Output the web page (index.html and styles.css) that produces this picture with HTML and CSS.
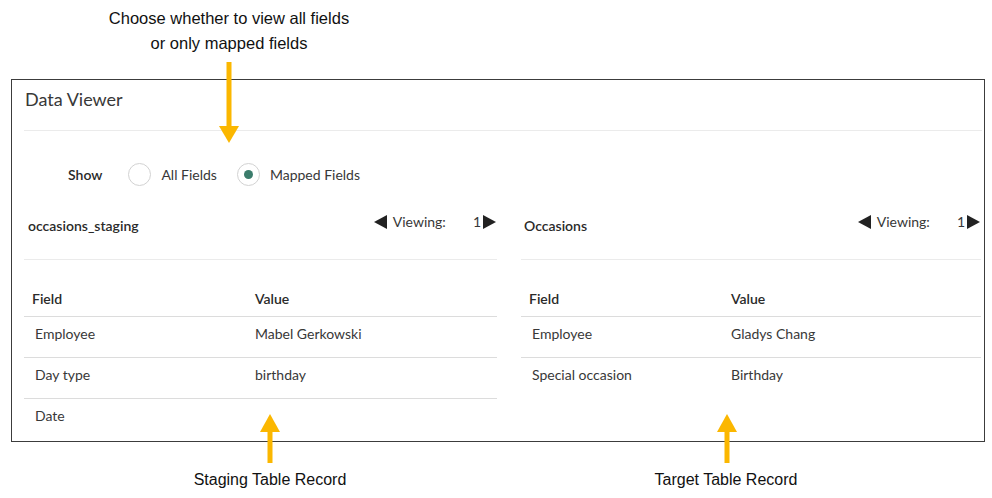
FILE: index.html
```html
<!DOCTYPE html>
<html lang="en">
<head>
    <meta charset="UTF-8">
    <title>Data Viewer</title>
    <link rel="stylesheet" href="styles.css">
</head>
<body>

<div class="page">
    <div class="note-top">Choose whether to view all fields<br>or only mapped fields</div>

    <div class="viewer">
        <div class="viewer-head">Data Viewer</div>

        <div class="show-row">
            <span class="show-label">Show</span>
            <label class="radio"><span class="radio-dot"></span>All Fields</label>
            <label class="radio checked"><span class="radio-dot"></span>Mapped Fields</label>
        </div>

        <div class="panels">
            <!-- staging side -->
            <div class="panel panel-left">
                <div class="panel-head">
                    <span class="panel-title">occasions_staging</span>
                    <div class="pager">
                        <svg class="tri" width="13" height="14" viewBox="0 0 13 14"><polygon points="13,0 13,14 0,7"/></svg>
                        <span class="pager-label">Viewing:</span>
                        <span class="pager-num">1</span>
                        <svg class="tri" width="13" height="14" viewBox="0 0 13 14"><polygon points="0,0 0,14 13,7"/></svg>
                    </div>
                </div>
                <div class="rec">
                    <div class="rec-row rec-header"><span class="cell-f">Field</span><span class="cell-v">Value</span></div>
                    <div class="rec-row"><span class="cell-f">Employee</span><span class="cell-v">Mabel Gerkowski</span></div>
                    <div class="rec-row"><span class="cell-f">Day type</span><span class="cell-v">birthday</span></div>
                    <div class="rec-row last"><span class="cell-f">Date</span><span class="cell-v"></span></div>
                </div>
            </div>

            <!-- target side -->
            <div class="panel panel-right">
                <div class="panel-head">
                    <span class="panel-title">Occasions</span>
                    <div class="pager">
                        <svg class="tri" width="13" height="14" viewBox="0 0 13 14"><polygon points="13,0 13,14 0,7"/></svg>
                        <span class="pager-label">Viewing:</span>
                        <span class="pager-num">1</span>
                        <svg class="tri" width="13" height="14" viewBox="0 0 13 14"><polygon points="0,0 0,14 13,7"/></svg>
                    </div>
                </div>
                <div class="rec">
                    <div class="rec-row rec-header"><span class="cell-f">Field</span><span class="cell-v">Value</span></div>
                    <div class="rec-row"><span class="cell-f">Employee</span><span class="cell-v">Gladys Chang</span></div>
                    <div class="rec-row last"><span class="cell-f">Special occasion</span><span class="cell-v">Birthday</span></div>
                </div>
            </div>
        </div>
    </div>

    <div class="captions">
        <span>Staging Table Record</span>
        <span>Target Table Record</span>
    </div>

    <!-- callout arrows -->
    <svg class="arrow arrow-down" width="20" height="82" viewBox="0 0 20 82">
        <rect x="7.5" y="0" width="5" height="66"/>
        <polygon points="0,64 20,64 10,81"/>
    </svg>
    <svg class="arrow arrow-up arrow-staging" width="20" height="49" viewBox="0 0 20 49">
        <polygon points="10,0 20,18 0,18"/>
        <rect x="7.5" y="17" width="5" height="32"/>
    </svg>
    <svg class="arrow arrow-up arrow-target" width="20" height="49" viewBox="0 0 20 49">
        <polygon points="10,0 20,18 0,18"/>
        <rect x="7.5" y="17" width="5" height="32"/>
    </svg>
</div>

</body>
</html>
```

FILE: styles.css
```css
body {
    margin: 0;
    background-color: white;
    font-family: Lato, "Liberation Sans", sans-serif;
    color: #383838;
}
.page {
    position: relative;
    width: 992px;
    height: 498px;
}
.note-top {
    width: 458px;
    height: 73px;
    padding-top: 6px;
    text-align: center;
    font-family: "Liberation Sans", Arial, sans-serif;
    font-size: 16.5px;
    line-height: 25px;
    color: #111;
}
.viewer {
    margin-left: 11px;
    width: 972px;
    height: 361px;
    border: 1px solid #3c3c3c;
}
.viewer-head {
    margin: 0 2px 0 12px;
    height: 42px;
    padding: 8px 0 0 1px;
    font-size: 18px;
    line-height: 22px;
    border-bottom: 1px solid #ebebeb;
}
.show-row {
    display: flex;
    align-items: center;
    height: 24px;
    margin-top: 31px;
    padding-left: 56px;
    font-size: 14px;
}
.show-label {
    font-weight: 600;
    color: #2a2a2a;
    margin-right: 26px;
}
.radio {
    display: flex;
    align-items: center;
    margin-right: 20px;
}
.radio-dot {
    width: 21px;
    height: 21px;
    border: 1px solid #d2d2d2;
    border-radius: 50%;
    margin-right: 10px;
    display: flex;
    align-items: center;
    justify-content: center;
}
.radio.checked .radio-dot::after {
    content: "";
    width: 9px;
    height: 9px;
    border-radius: 50%;
    background-color: #3b7c6b;
}
.panels {
    display: flex;
    gap: 24px;
    padding-left: 12px;
}
.panel-left {
    width: 473px;
}
.panel-right {
    width: 460px;
}
.panel-head {
    display: flex;
    justify-content: space-between;
    align-items: flex-start;
    height: 74px;
    box-sizing: border-box;
    border-bottom: 1px solid #ebebeb;
    font-size: 14px;
}
.panel-title {
    padding: 29px 0 0 4px;
    line-height: 22px;
    font-weight: 600;
    color: #2a2a2a;
}
.panel-right .panel-title {
    padding-left: 3px;
}
.pager {
    display: flex;
    align-items: center;
    padding-top: 25px;
    margin-right: 1px;
    line-height: 22px;
}
.tri {
    fill: #222;
}
.pager-label {
    margin-left: 6px;
}
.pager-num {
    margin-left: 27px;
    margin-right: 2px;
}
.rec {
    font-size: 14px;
}
.rec-row {
    display: grid;
    grid-template-columns: 223px 1fr;
    padding: 6px 0 12px;
    line-height: 22px;
    border-bottom: 1px solid #dcdcdc;
}
.panel-right .rec-row {
    grid-template-columns: 202px 1fr;
}
.rec-row.last {
    border-bottom: none;
}
.rec-header {
    padding: 28px 0 6px;
    font-weight: 600;
    color: #2a2a2a;
}
.cell-f {
    padding-left: 11px;
}
.rec-header .cell-f {
    padding-left: 8px;
}
.cell-v {
    padding-left: 8px;
}
.captions {
    display: grid;
    grid-template-columns: 540px 372px;
    margin-top: 26px;
    text-align: center;
    font-family: "Liberation Sans", Arial, sans-serif;
    font-size: 16px;
    line-height: 24px;
    color: #111;
}
.arrow {
    position: absolute;
    fill: #fbb700;
}
.arrow-down {
    left: 219px;
    top: 62px;
}
.arrow-up {
    top: 414px;
}
.arrow-staging {
    left: 260px;
}
.arrow-target {
    left: 717px;
}
```
